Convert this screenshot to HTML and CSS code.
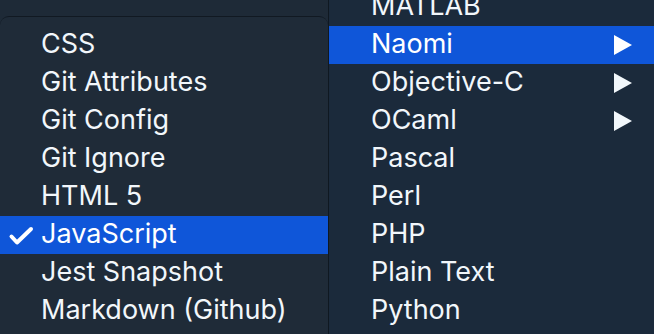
FILE: index.html
```html
<!DOCTYPE html>
<html lang="en">
<head>
    <meta charset="UTF-8">
    <title>Language menu</title>
    <link rel="stylesheet" href="styles.css">
</head>
<body>
    <div class="screen">
        <div class="menu menu-sub">
            <ul class="items">
                <li class="item">CSS</li>
                <li class="item">Git Attributes</li>
                <li class="item">Git Config</li>
                <li class="item">Git Ignore</li>
                <li class="item">HTML 5</li>
                <li class="item selected">
                    <svg class="check" width="26" height="20" viewBox="0 0 26 20">
                        <polyline points="3.5,10.5 9,16.5 23,3" fill="none" stroke="#ffffff" stroke-width="4" stroke-linecap="round" stroke-linejoin="round"/>
                    </svg>
                    JavaScript
                </li>
                <li class="item">Jest Snapshot</li>
                <li class="item">Markdown (Github)</li>
            </ul>
        </div>

        <div class="menu menu-main">
            <ul class="items shifted">
                <li class="item">MATLAB</li>
                <li class="item selected">Naomi <span class="arrow"></span></li>
                <li class="item">Objective-C <span class="arrow"></span></li>
                <li class="item">OCaml <span class="arrow"></span></li>
                <li class="item">Pascal</li>
                <li class="item">Perl</li>
                <li class="item">PHP</li>
                <li class="item">Plain Text</li>
                <li class="item">Python</li>
            </ul>
        </div>
    </div>
</body>
</html>
```

FILE: styles.css
```css
html, body {
    margin: 0;
    height: 100%;
}
body {
    background-color: #1e2a37;
    font-family: Inter, "Open Sans", sans-serif;
    color: #f2f7fb;
    overflow: hidden;
}
.screen {
    display: flex;
    height: 334px;
}
.menu {
    box-sizing: border-box;
    overflow: hidden;
}
.menu-sub {
    width: 328px;
    margin-top: 16px;
    padding-top: 9px;
    background-color: #1f2b38;
    border-top: 1px solid #111922;
    border-radius: 9px 9px 0 0;
}
.menu-main {
    flex: 1;
    background-color: #1b2a3b;
    border-left: 1px solid #0f1821;
}
.items {
    list-style: none;
    margin: 0;
    padding: 0;
}
.shifted {
    margin-top: -12px;
}
.item {
    position: relative;
    height: 38px;
    line-height: 36px;
    padding-bottom: 2px;
    box-sizing: border-box;
    font-size: 27px;
    white-space: nowrap;
}
.menu-sub .item {
    padding-left: 41px;
}
.menu-main .item {
    padding-left: 42px;
}
.item.selected {
    background-color: #0f56d9;
    color: #ffffff;
}
/* checkmark sits in the gutter left of the label */
.check {
    position: absolute;
    left: 8px;
    top: 10px;
}
/* submenu triangle */
.arrow {
    position: absolute;
    right: 22px;
    top: 9px;
    width: 0;
    height: 0;
    border-top: 10px solid transparent;
    border-bottom: 10px solid transparent;
    border-left: 18px solid #f2f7fb;
}
.selected .arrow {
    border-left-color: #ffffff;
}
```
